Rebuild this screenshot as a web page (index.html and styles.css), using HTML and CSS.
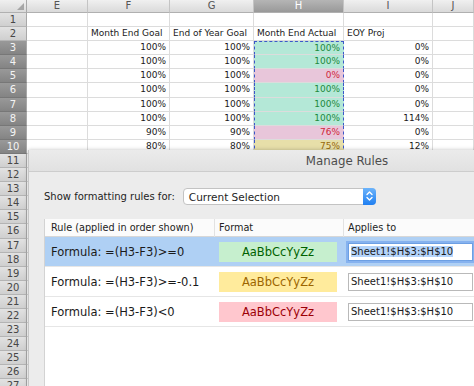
FILE: index.html
```html
<!DOCTYPE html>
<html lang="en">
  <head>
    <meta charset="UTF-8" />
    <title>Manage Rules</title>
    <link rel="stylesheet" href="styles.css">
  </head>
  <body>
    <!-- Worksheet -->
    <div class="sheet">
      <div class="row colhead">
        <div class="rh corner"></div>
        <div class="c e">E</div>
        <div class="c f">F</div>
        <div class="c g">G</div>
        <div class="c h on">H</div>
        <div class="c i">I</div>
        <div class="c j">J</div>
      </div>
      <div class="row">
        <div class="rh">1</div>
        <div class="c e"></div><div class="c f"></div><div class="c g"></div>
        <div class="c h"></div><div class="c i"></div><div class="c j"></div>
      </div>
      <div class="row">
        <div class="rh">2</div>
        <div class="c e"></div>
        <div class="c f txt">Month End Goal</div>
        <div class="c g txt">End of Year Goal</div>
        <div class="c h txt">Month End Actual</div>
        <div class="c i txt">EOY Proj</div>
        <div class="c j"></div>
      </div>
      <div class="row">
        <div class="rh on">3</div>
        <div class="c e"></div><div class="c f">100%</div><div class="c g">100%</div>
        <div class="c h sel first good">100%</div><div class="c i">0%</div><div class="c j"></div>
      </div>
      <div class="row">
        <div class="rh on">4</div>
        <div class="c e"></div><div class="c f">100%</div><div class="c g">100%</div>
        <div class="c h sel good">100%</div><div class="c i">0%</div><div class="c j"></div>
      </div>
      <div class="row">
        <div class="rh on">5</div>
        <div class="c e"></div><div class="c f">100%</div><div class="c g">100%</div>
        <div class="c h sel bad">0%</div><div class="c i">0%</div><div class="c j"></div>
      </div>
      <div class="row">
        <div class="rh on">6</div>
        <div class="c e"></div><div class="c f">100%</div><div class="c g">100%</div>
        <div class="c h sel good">100%</div><div class="c i">0%</div><div class="c j"></div>
      </div>
      <div class="row">
        <div class="rh on">7</div>
        <div class="c e"></div><div class="c f">100%</div><div class="c g">100%</div>
        <div class="c h sel good">100%</div><div class="c i">0%</div><div class="c j"></div>
      </div>
      <div class="row">
        <div class="rh on">8</div>
        <div class="c e"></div><div class="c f">100%</div><div class="c g">100%</div>
        <div class="c h sel good">100%</div><div class="c i">114%</div><div class="c j"></div>
      </div>
      <div class="row">
        <div class="rh on">9</div>
        <div class="c e"></div><div class="c f">90%</div><div class="c g">90%</div>
        <div class="c h sel bad">76%</div><div class="c i">0%</div><div class="c j"></div>
      </div>
      <div class="row">
        <div class="rh on">10</div>
        <div class="c e"></div><div class="c f">80%</div><div class="c g">80%</div>
        <div class="c h sel mid">75%</div><div class="c i">12%</div><div class="c j"></div>
      </div>
      <div class="row"><div class="rh">11</div><div class="c rest"></div></div>
      <div class="row"><div class="rh">12</div><div class="c rest"></div></div>
      <div class="row"><div class="rh">13</div><div class="c rest"></div></div>
      <div class="row"><div class="rh">14</div><div class="c rest"></div></div>
      <div class="row"><div class="rh">15</div><div class="c rest"></div></div>
      <div class="row"><div class="rh">16</div><div class="c rest"></div></div>
      <div class="row"><div class="rh">17</div><div class="c rest"></div></div>
      <div class="row"><div class="rh">18</div><div class="c rest"></div></div>
      <div class="row"><div class="rh">19</div><div class="c rest"></div></div>
      <div class="row"><div class="rh">20</div><div class="c rest"></div></div>
      <div class="row"><div class="rh">21</div><div class="c rest"></div></div>
      <div class="row"><div class="rh">22</div><div class="c rest"></div></div>
      <div class="row"><div class="rh">23</div><div class="c rest"></div></div>
      <div class="row"><div class="rh">24</div><div class="c rest"></div></div>
      <div class="row"><div class="rh">25</div><div class="c rest"></div></div>
      <div class="row"><div class="rh">26</div><div class="c rest"></div></div>
      <div class="row"><div class="rh">27</div><div class="c rest"></div></div>
    </div>

    <!-- Manage Rules dialog -->
    <div class="dialog">
      <div class="titlebar">Manage Rules</div>
      <div class="dialog-body">
        <div class="show-for">
          <span class="label">Show formatting rules for:</span>
          <div class="select">
            <span class="select-value">Current Selection</span>
            <span class="stepper">
              <svg width="13" height="16" viewBox="0 0 13 16">
                <path d="M4 6.5 L6.5 4 L9 6.5" fill="none" stroke="#fff" stroke-width="1.4" stroke-linecap="round" stroke-linejoin="round"/>
                <path d="M4 9.5 L6.5 12 L9 9.5" fill="none" stroke="#fff" stroke-width="1.4" stroke-linecap="round" stroke-linejoin="round"/>
              </svg>
            </span>
          </div>
        </div>

        <div class="rules">
          <div class="rules-head">
            <div class="col-rule">Rule (applied in order shown)</div>
            <div class="col-format">Format</div>
            <div class="col-applies">Applies to</div>
          </div>
          <div class="rule selected">
            <div class="col-rule">Formula: =(H3-F3)&gt;=0</div>
            <div class="col-format"><div class="swatch good">AaBbCcYyZz</div></div>
            <div class="col-applies">
              <div class="range focus"><span class="sel-text">Sheet1!$H$3:$H$10</span></div>
            </div>
          </div>
          <div class="rule">
            <div class="col-rule">Formula: =(H3-F3)&gt;=-0.1</div>
            <div class="col-format"><div class="swatch mid">AaBbCcYyZz</div></div>
            <div class="col-applies"><div class="range">Sheet1!$H$3:$H$10</div></div>
          </div>
          <div class="rule">
            <div class="col-rule">Formula: =(H3-F3)&lt;0</div>
            <div class="col-format"><div class="swatch bad">AaBbCcYyZz</div></div>
            <div class="col-applies"><div class="range">Sheet1!$H$3:$H$10</div></div>
          </div>
        </div>
      </div>
    </div>
  </body>
</html>
```

FILE: styles.css
```css
* {
  box-sizing: border-box;
}
html,
body {
  margin: 0;
  padding: 0;
  height: 100%;
  background: #ffffff;
  font-family: "DejaVu Sans", Verdana, sans-serif;
  color: #1a1a1a;
  overflow: hidden;
  position: relative;
}

/* Worksheet */
.sheet {
  width: 100%;
}
.row {
  display: flex;
  height: 14.1px;
}
.rh {
  flex: 0 0 27px;
  border-right: 1px solid #a8a8a8;
  border-bottom: 1px solid #b4b4b4;
  background: linear-gradient(#e2e2e2, #cfcfcf);
  color: #474747;
  font-size: 10px;
  line-height: 13px;
  text-align: center;
}
.rh.on {
  background: linear-gradient(#999, #848484);
  border-bottom-color: #777;
  color: #f4f4f4;
}
.c {
  border-right: 1px solid #dcdcdc;
  border-bottom: 1px solid #dcdcdc;
  padding: 0 3px;
  font-size: 9px;
  line-height: 13px;
  text-align: right;
  white-space: nowrap;
  overflow: hidden;
}
.c.txt {
  text-align: left;
}
.e { flex: 0 0 61px; }
.f { flex: 0 0 82px; }
.g { flex: 0 0 84px; }
.h { flex: 0 0 90px; }
.i { flex: 0 0 89px; }
.j { flex: 1 1 auto; }
.rest { flex: 1 1 auto; }

.colhead {
  height: 13px;
}
.colhead .rh,
.colhead .c {
  background: linear-gradient(#f0f0f0, #dadada);
  border-right-color: #c4c4c4;
  border-bottom: 1px solid #b0b0b0;
  color: #555;
  font-size: 10px;
  line-height: 12px;
  text-align: center;
}
.colhead .corner {
  position: relative;
  border-right-color: #a8a8a8;
}
.colhead .corner::after {
  content: "";
  position: absolute;
  right: 2px;
  bottom: 2px;
  border-style: solid;
  border-width: 0 0 7px 7px;
  border-color: transparent transparent #a6a6a6 transparent;
}
.colhead .c.on {
  background: linear-gradient(#b5b5b5, #999);
  color: #ffffff;
}

/* selected range H3:H10 */
.c.sel {
  border-left: 1px dashed #3c57c9;
  border-right: 1px dashed #3c57c9;
}
.c.sel.first {
  border-top: 1px dashed #3c57c9;
  line-height: 12px;
}
.c.good {
  background: #b4e8d7;
  color: #22883c;
}
.c.bad {
  background: #e8c6da;
  color: #d0283a;
}
.c.mid {
  background: #e7dfa9;
  color: #97680a;
}

/* Dialog */
.dialog {
  position: absolute;
  left: 28px;
  top: 150px;
  width: 637px;
  height: 260px;
  background: #ececec;
  border-left: 1px solid #c6c6c6;
  box-shadow: 0 0 4px rgba(0, 0, 0, 0.25);
}
.titlebar {
  height: 22px;
  background: linear-gradient(#ebebeb, #e1e1e1);
  border-bottom: 1px solid #cdcdcd;
  color: #4d4d4d;
  font-size: 11.8px;
  line-height: 22px;
  text-align: center;
}
.dialog-body {
  padding-left: 15px;
}
.show-for {
  display: flex;
  align-items: center;
  gap: 8px;
  margin-top: 16px;
  height: 17px;
  font-size: 10px;
  color: #1e1e1e;
}
.select {
  display: flex;
  align-items: center;
  width: 193px;
  height: 17px;
  background: #ffffff;
  border: 1px solid #c3c3c3;
  border-radius: 4px;
  font-size: 10.5px;
}
.select-value {
  flex: 1;
  padding-left: 5px;
}
.stepper {
  display: flex;
  width: 13px;
  height: 17px;
  margin: -1px -1px -1px 0;
  border-radius: 0 4px 4px 0;
  background: linear-gradient(#6db4fb, #1f7ff1);
}

.rules {
  margin-top: 14px;
  height: 200px;
  background: #ffffff;
  border-left: 1px solid #d3d3d3;
}
.rules-head,
.rule {
  display: flex;
  align-items: center;
}
.rules-head {
  height: 18px;
  background: #fbfbfb;
  border-bottom: 1px solid #d7d7d7;
  font-size: 9.7px;
  color: #222;
}
.rules-head > div {
  height: 18px;
  line-height: 17px;
  border-right: 1px solid #e2e2e2;
}
.col-rule {
  flex: 0 0 170px;
  padding-left: 6px;
  white-space: nowrap;
}
.col-format {
  flex: 0 0 129px;
  padding-left: 4px;
}
.col-applies {
  flex: 1 1 auto;
  padding-left: 4px;
}
.rule {
  height: 30px;
  border-bottom: 1px solid #e6e6e6;
  font-size: 11.5px;
  color: #1a1a1a;
}
.rule.selected {
  background: #afd0f4;
}
.swatch {
  width: 118px;
  height: 20px;
  font-size: 11.5px;
  line-height: 20px;
  text-align: center;
}
.swatch.good {
  background: #c6efce;
  color: #006100;
}
.swatch.mid {
  background: #ffeb9c;
  color: #9c6500;
}
.swatch.bad {
  background: #ffc7ce;
  color: #9c0006;
}
.range {
  width: 125px;
  height: 18px;
  padding-left: 2px;
  background: #ffffff;
  border: 1px solid #b9b9b9;
  font-size: 10px;
  line-height: 16px;
  white-space: nowrap;
  overflow: hidden;
}
.range.focus {
  border-color: #6c9fe3;
  box-shadow: 0 0 0 2px #86b2ef;
}
.sel-text {
  background: #b4d4fb;
}
```
